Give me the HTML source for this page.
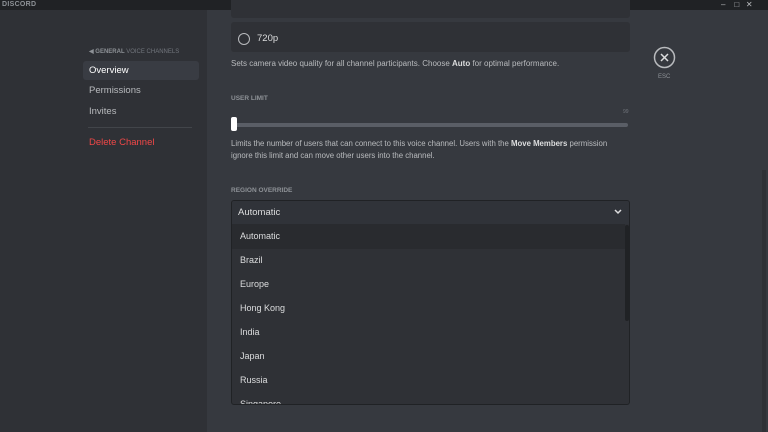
<!DOCTYPE html><html><head><style>
*{margin:0;padding:0;box-sizing:border-box}
body{width:768px;height:432px;overflow:hidden;background:#36393f;font-family:"Liberation Sans",sans-serif;position:relative}
.a{position:absolute}
.t{color:#dcddde;font-size:9px}
.d{color:#b9bbbe;font-size:7.8px}
.h{color:#8e9297;font-size:6.5px;font-weight:bold}
.it{position:absolute;left:8px;color:#dcddde;font-size:9px}
</style></head><body>
<div class="a" style="left:0;top:0;width:207px;height:432px;background:#2f3136"></div>
<div class="a" style="left:0;top:0;width:768px;height:10px;background:#202225"></div>
<div class="a" style="left:2px;top:1px;color:#8e9297;font-size:7px;font-weight:bold;letter-spacing:0.3px">DISCORD</div>
<div class="a" style="left:721px;top:0;color:#b9bbbe;font-size:8px;line-height:9px">–&nbsp;&nbsp;&nbsp;&nbsp;□&nbsp;&nbsp;&nbsp;✕</div>
<div class="a" style="left:762px;top:170px;width:4px;height:262px;background:#2f3136"></div>
<div class="a h" style="left:89px;top:48px;font-size:6px">◀ GENERAL <span style="font-weight:normal;color:#72767d">VOICE CHANNELS</span></div>
<div class="a" style="left:83px;top:61px;width:116px;height:19px;background:#393c43;border-radius:3px"></div>
<div class="a" style="left:89px;top:65px;color:#fff;font-size:9.5px">Overview</div>
<div class="a" style="left:89px;top:85px;color:#b9bbbe;font-size:9.5px">Permissions</div>
<div class="a" style="left:89px;top:106px;color:#b9bbbe;font-size:9.5px">Invites</div>
<div class="a" style="left:88px;top:127px;width:104px;height:1px;background:#42454a"></div>
<div class="a" style="left:89px;top:137px;color:#f04747;font-size:9.5px">Delete Channel</div>
<div class="a" style="left:231px;top:0;width:399px;height:18px;background:#2f3136;border-radius:0 0 3px 3px"></div>
<div class="a" style="left:231px;top:22px;width:399px;height:30px;background:#2f3136;border-radius:3px"></div>
<div class="a" style="left:238px;top:33px;width:12px;height:12px;border:1.5px solid #b9bbbe;border-radius:50%"></div>
<div class="a t" style="left:257px;top:33px;font-size:9.5px">720p</div>
<div class="a d" style="left:231px;top:59px;font-size:8px">Sets camera video quality for all channel participants. Choose <b style="color:#dcddde">Auto</b> for optimal performance.</div>
<svg class="a" style="left:653px;top:46px" width="23" height="23"><circle cx="11.5" cy="11.5" r="10" fill="none" stroke="#b9bbbe" stroke-width="1.5"/><path d="M8 8L15 15M15 8L8 15" stroke="#dcddde" stroke-width="1.5"/></svg>
<div class="a" style="left:658px;top:74px;color:#8e9297;font-size:6px">ESC</div>
<div class="a h" style="left:231px;top:95px">USER LIMIT</div>
<div class="a" style="left:233px;top:123px;width:395px;height:4px;background:#5a5e66;border-radius:2px"></div>
<div class="a" style="left:231px;top:117px;width:6px;height:14px;background:#fff;border-radius:2px"></div>
<div class="a" style="left:623px;top:109px;color:#72767d;font-size:5px">99</div>
<div class="a d" style="left:231px;top:138px;line-height:12px">Limits the number of users that can connect to this voice channel. Users with the <b style="color:#dcddde">Move Members</b> permission<br>ignore this limit and can move other users into the channel.</div>
<div class="a h" style="left:231px;top:187px">REGION OVERRIDE</div>
<div class="a" style="left:231px;top:200px;width:399px;height:205px;background:#2f3136;border:1px solid #202225;border-radius:3px;overflow:hidden">
<div class="a" style="left:0;top:0;width:399px;height:23px;background:#303339"></div>
<div class="it" style="left:6px;top:6px;font-size:9.5px">Automatic</div>
<svg class="a" style="left:381px;top:7px" width="10" height="8"><path d="M2 2L5 5L8 2" fill="none" stroke="#dcddde" stroke-width="1.5"/></svg>
<div class="a" style="left:0;top:23px;width:393px;height:25px;background:#292b2f"></div>
<div class="a" style="left:393px;top:24px;width:4px;height:96px;background:#202225;border-radius:2px"></div>
<div class="it" style="top:30px">Automatic</div>
<div class="it" style="top:54px">Brazil</div>
<div class="it" style="top:78px">Europe</div>
<div class="it" style="top:102px">Hong Kong</div>
<div class="it" style="top:126px">India</div>
<div class="it" style="top:150px">Japan</div>
<div class="it" style="top:174px">Russia</div>
<div class="it" style="top:198px">Singapore</div>
</div>
</body></html>
